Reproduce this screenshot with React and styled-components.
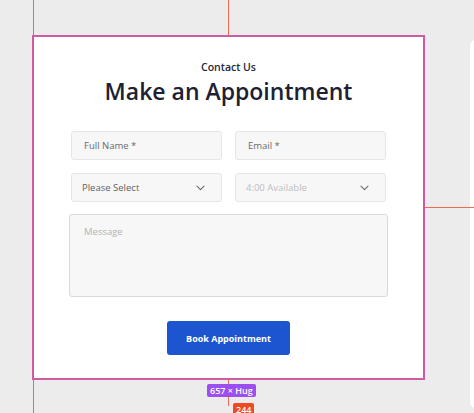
import React from "react";
import styled, { createGlobalStyle } from "styled-components";

const Global = createGlobalStyle`
  html, body { margin: 0; padding: 0; background: #ececec; }
  body { font-family: "Open Sans", "Noto Sans", sans-serif; overflow: hidden; }
  #root { width: 474px; height: 413px; position: relative; overflow: hidden; }
`;

const Canvas = styled.div`
  display: flex;
  align-items: flex-start;
  padding: 35px 0 0 32px;
  gap: 45px;
  height: 413px;
  box-sizing: border-box;
`;

const Card = styled.section`
  position: relative;
  width: 393px;
  height: 345px;
  box-sizing: border-box;
  flex-shrink: 0;
  background: #ffffff;
  border: 2px solid #cf5ba3;
  display: flex;
  flex-direction: column;
  align-items: center;
  padding-top: 23px;
`;

const SidePanel = styled.div`
  flex-shrink: 0;
  width: 60px;
  height: 368px;
  margin-top: 5px;
  background: #ffffff;
  border-radius: 6px;
`;

const Eyebrow = styled.div`
  font-size: 10.5px;
  line-height: 14px;
  font-weight: 600;
  color: #252838;
`;

const Title = styled.h1`
  margin: 2px 0 0;
  font-size: 23px;
  line-height: 30px;
  font-weight: 600;
  color: #1d2133;
`;

const Form = styled.form`
  margin-top: 25px;
  width: 319px;
  display: flex;
  flex-direction: column;
  align-items: center;
`;

const Grid = styled.div`
  width: 315px;
  display: grid;
  grid-template-columns: 1fr 1fr;
  column-gap: 13px;
  row-gap: 13px;
`;

const fieldBase = `
  box-sizing: border-box;
  background: #f7f7f7;
  border: 1px solid #e6e6e6;
  border-radius: 3px;
  font-family: "Open Sans", "Noto Sans", sans-serif;
  font-size: 9.5px;
  outline: none;
`;

const Input = styled.input`
  ${fieldBase}
  height: 29px;
  width: 100%;
  padding: 0 12px;
  color: #555;
  &::placeholder { color: #6a6a6a; }
`;

const Select = styled.div`
  ${fieldBase}
  height: 29px;
  display: flex;
  align-items: center;
  justify-content: space-between;
  padding: 0 16px 0 10px;
  color: ${(p) => (p.$muted ? "#bdbdbd" : "#5f5f5f")};
`;

const Chevron = () => (
  <svg width="9" height="6" viewBox="0 0 9 6" fill="none">
    <path d="M1 1.2l3.5 3.5 3.5-3.5" stroke="#6a6a6a" strokeWidth="1.1" strokeLinecap="round" strokeLinejoin="round" />
  </svg>
);

const TextArea = styled.textarea`
  ${fieldBase}
  margin-top: 12px;
  width: 319px;
  height: 83px;
  resize: none;
  padding: 10px 14px;
  border-color: #d9d9d9;
  &::placeholder { color: #b3b3b3; }
`;

const Button = styled.button`
  margin-top: 24px;
  width: 123px;
  height: 34px;
  border: none;
  border-radius: 3px;
  background: #1c55cf;
  color: #ffffff;
  font-family: "Open Sans", "Noto Sans", sans-serif;
  font-size: 9px;
  font-weight: 700;
`;

const Guide = styled.div`
  position: absolute;
  background: #ee6a55;
`;

const Badge = styled.div`
  position: absolute;
  font-family: "Open Sans", "Noto Sans", sans-serif;
  font-size: 9px;
  font-weight: 600;
  line-height: 13px;
  color: #ffffff;
  padding: 0 3px;
  border-radius: 2px;
  background: ${(p) => p.$bg};
`;

export default function App() {
  return (
    <>
      <Global />
      <Canvas>
        <Card>
          <Eyebrow>Contact Us</Eyebrow>
          <Title>Make an Appointment</Title>
          <Form onSubmit={(e) => e.preventDefault()}>
            <Grid>
              <Input placeholder="Full Name *" />
              <Input placeholder="Email *" />
              <Select>
                <span>Please Select</span>
                <Chevron />
              </Select>
              <Select $muted>
                <span>4:00 Available</span>
                <Chevron />
              </Select>
            </Grid>
            <TextArea placeholder="Message" />
            <Button type="submit">Book Appointment</Button>
          </Form>
        </Card>
        <SidePanel />
      </Canvas>
      <Guide style={{ left: 33, top: 0, width: 1, height: 35 }} />
      <Guide style={{ left: 228, top: 0, width: 1, height: 35 }} />
      <Guide style={{ left: 33, top: 380, width: 1, height: 33 }} />
      <Guide style={{ left: 228, top: 380, width: 1, height: 26 }} />
      <Guide style={{ left: 425, top: 207, width: 49, height: 1 }} />
      <Badge $bg="#9b4ff0" style={{ left: 207, top: 384 }}>657 × Hug</Badge>
      <Badge $bg="#ef4a23" style={{ left: 233, top: 403 }}>244</Badge>
    </>
  );
}
